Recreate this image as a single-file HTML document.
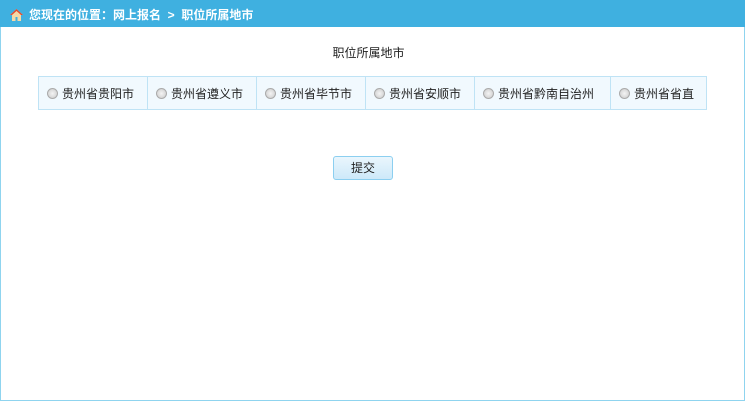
<!DOCTYPE html><html><head><meta charset="utf-8"><style>
body{margin:0;width:745px;height:411px;background:#fff;font-family:"Liberation Sans","Noto Sans CJK SC",sans-serif;font-size:12px;color:#222;position:relative}
.box{position:absolute;left:0;top:0;width:743px;height:400px;border:1px solid #8fd4ef;border-top:none}
.hd{position:absolute;left:0;top:0;width:745px;height:27px;background:#3fb0e0;color:#fff;font-size:12px}
.hd span{position:absolute;left:29px;top:7px;line-height:16px;font-weight:bold}
.title{position:absolute;left:0;width:737px;top:44px;text-align:center;font-size:12px}
table{position:absolute;left:38px;top:76px;border-collapse:collapse;background:#f1f9fe}
td{border:1px solid #bfe3f5;height:32px;padding:0 0 0 8px;font-size:12px;white-space:nowrap}
.r{display:inline-block;width:9px;height:9px;border-radius:50%;border:1px solid #aaa;background:radial-gradient(#f4f4f4,#c9c9c9);vertical-align:-1px;margin-right:4px}
.btn{position:absolute;left:333px;top:156px;width:58px;height:22px;border:1px solid #8ccff0;border-radius:3px;background:linear-gradient(#eaf6fd,#cde9f9);text-align:center;line-height:22px;font-size:12px}
</style></head><body>
<div class="box"></div>
<div class="hd"><svg style="position:absolute;left:10px;top:9px" width="13" height="12" viewBox="0 0 13 12"><path d="M6.5 0L0 6h2v6h3.5V8h2v4H11V6h2z" fill="#f6d9a6"/><path d="M6.5 0L0 6h2L6.5 2 11 6h2z" fill="#e2492f"/></svg><span>您现在的位置：网上报名 &nbsp;&gt;&nbsp; 职位所属地市</span></div>
<div class="title">职位所属地市</div>
<table><tr>
<td style="width:100px"><i class="r"></i>贵州省贵阳市</td>
<td style="width:100px"><i class="r"></i>贵州省遵义市</td>
<td style="width:100px"><i class="r"></i>贵州省毕节市</td>
<td style="width:100px"><i class="r"></i>贵州省安顺市</td>
<td style="width:127px"><i class="r"></i>贵州省黔南自治州</td>
<td style="width:87px"><i class="r"></i>贵州省省直</td>
</tr></table>
<div class="btn">提交</div>
</body></html>
